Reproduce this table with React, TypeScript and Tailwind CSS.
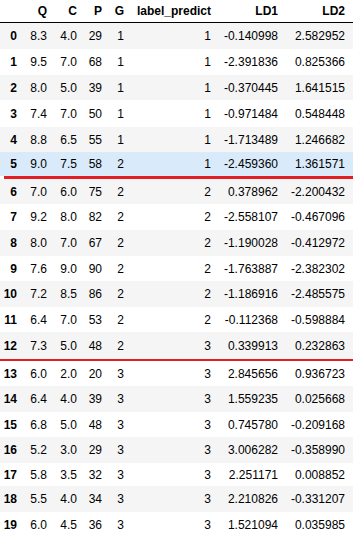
import React from "react";

const rows: [string, string, string, string, string, string, string][] = [
  ["8.3", "4.0", "29", "1", "1", "-0.140998", "2.582952"],
  ["9.5", "7.0", "68", "1", "1", "-2.391836", "0.825366"],
  ["8.0", "5.0", "39", "1", "1", "-0.370445", "1.641515"],
  ["7.4", "7.0", "50", "1", "1", "-0.971484", "0.548448"],
  ["8.8", "6.5", "55", "1", "1", "-1.713489", "1.246682"],
  ["9.0", "7.5", "58", "2", "1", "-2.459360", "1.361571"],
  ["7.0", "6.0", "75", "2", "2", "0.378962", "-2.200432"],
  ["9.2", "8.0", "82", "2", "2", "-2.558107", "-0.467096"],
  ["8.0", "7.0", "67", "2", "2", "-1.190028", "-0.412972"],
  ["7.6", "9.0", "90", "2", "2", "-1.763887", "-2.382302"],
  ["7.2", "8.5", "86", "2", "2", "-1.186916", "-2.485575"],
  ["6.4", "7.0", "53", "2", "2", "-0.112368", "-0.598884"],
  ["7.3", "5.0", "48", "2", "3", "0.339913", "0.232863"],
  ["6.0", "2.0", "20", "3", "3", "2.845656", "0.936723"],
  ["6.4", "4.0", "39", "3", "3", "1.559235", "0.025668"],
  ["6.8", "5.0", "48", "3", "3", "0.745780", "-0.209168"],
  ["5.2", "3.0", "29", "3", "3", "3.006282", "-0.358990"],
  ["5.8", "3.5", "32", "3", "3", "2.251171", "0.008852"],
  ["5.5", "4.0", "34", "3", "3", "2.210826", "-0.331207"],
  ["6.0", "4.5", "36", "3", "3", "1.521094", "0.035985"],
];

const heights = [26, 26, 25, 27, 25, 24, 25, 26, 26, 25, 26, 25, 27, 25, 26, 25, 26, 23, 26, 25];

const widths = ["w-[23px]", "w-[30px]", "w-[30px]", "w-[25px]", "w-[22px]", "w-[87px]", "w-[67px]", "w-[67px]"];

function Cell({ w, children, bold }: { w: string; children: React.ReactNode; bold?: boolean }) {
  return (
    <div className={`${w} shrink-0 pr-[6px] text-right whitespace-nowrap ${bold ? "font-bold" : ""}`}>
      {children}
    </div>
  );
}

export default function App() {
  const header = ["", "Q", "C", "P", "G", "label_predict", "LD1", "LD2"];
  return (
    <div
      className="w-[353px] h-[534px] overflow-hidden bg-white text-black text-[12px] leading-[14px]"
      style={{ fontFamily: '"Liberation Sans", Arial, sans-serif' }}
    >
      <div className="flex items-center h-[23px] border-b border-black">
        {header.map((h, i) => (
          <Cell key={i} w={widths[i]} bold>
            {h}
          </Cell>
        ))}
      </div>
      {rows.map((r, idx) => {
        const bg = idx === 5 ? "bg-[#d9eafa]" : idx % 2 === 0 ? "bg-[#f5f5f5]" : "bg-white";
        return (
          <React.Fragment key={idx}>
            <div className={`flex items-center ${bg}`} style={{ height: heights[idx] }}>
              <Cell w={widths[0]} bold>
                {idx}
              </Cell>
              {r.map((v, j) => (
                <Cell key={j} w={widths[j + 1]}>
                  {v}
                </Cell>
              ))}
            </div>
            {idx === 5 && (
              <div className="h-[3px] bg-white">
                <div className="ml-[4px] h-full bg-[#e31e24]" />
              </div>
            )}
            {idx === 12 && <div className="h-[2px] bg-[#e31e24]" />}
          </React.Fragment>
        );
      })}
    </div>
  );
}
